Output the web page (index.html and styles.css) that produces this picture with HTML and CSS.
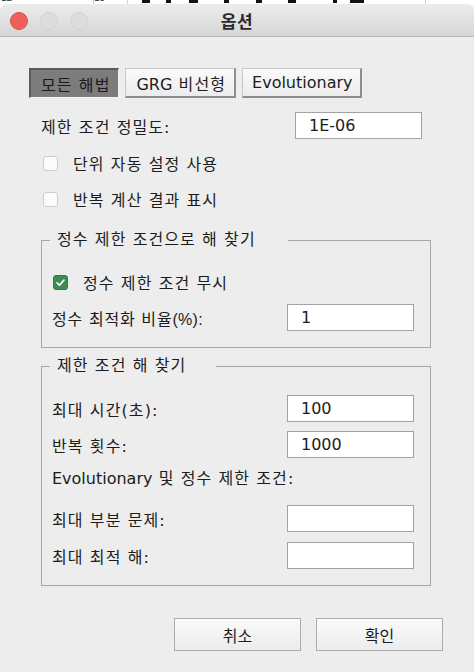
FILE: index.html
```html
<!DOCTYPE html>
<html lang="ko">
<head>
    <meta charset="UTF-8">
    <meta name="viewport" content="width=device-width, initial-scale=1.0">
    <title>옵션</title>
    <link rel="stylesheet" href="styles.css">
</head>
<body>

    <div class="sheet-strip">
        <div class="cell c1"><span>12</span></div>
        <div class="cell c2"><span>13</span></div>
        <div class="cell c3"></div>
        <div class="cell c4"></div>
    </div>

    <div class="window">
        <div class="titlebar">
            <div class="lights">
                <span class="light close"></span>
                <span class="light"></span>
                <span class="light"></span>
            </div>
            <div class="title">옵션</div>
        </div>

        <div class="content">
            <div class="tabs">
                <button class="tab active">모든 해법</button>
                <button class="tab"><span class="lat">GRG</span> 비선형</button>
                <button class="tab lat">Evolutionary</button>
            </div>

            <div class="row top-row">
                <span class="label">제한 조건 정밀도:</span>
                <input class="field wide" type="text" value="1E-06">
            </div>

            <label class="check first">
                <span class="box"></span>
                <span>단위 자동 설정 사용</span>
            </label>
            <label class="check second">
                <span class="box"></span>
                <span>반복 계산 결과 표시</span>
            </label>

            <fieldset class="group group-int">
                <legend>정수 제한 조건으로 해 찾기</legend>
                <label class="check inner">
                    <span class="box checked">
                        <svg viewBox="0 0 16 16" width="11" height="11"><path d="M3 8.5 L6.5 12 L13 4.5" fill="none" stroke="#fff" stroke-width="2.4" stroke-linecap="round" stroke-linejoin="round"/></svg>
                    </span>
                    <span>정수 제한 조건 무시</span>
                </label>
                <div class="row r-int">
                    <span class="label tight">정수 최적화 비율<span class="narrow">(%):</span></span>
                    <input class="field" type="text" value="1">
                </div>
            </fieldset>

            <fieldset class="group group-limit">
                <legend>제한 조건 해 찾기</legend>
                <div class="row r1">
                    <span class="label">최대 시간(초):</span>
                    <input class="field" type="text" value="100">
                </div>
                <div class="row r2">
                    <span class="label">반복 횟수:</span>
                    <input class="field" type="text" value="1000">
                </div>
                <div class="note"><span class="lat">Evolutionary</span> 및 정수 제한 조건:</div>
                <div class="row r3">
                    <span class="label">최대 부분 문제:</span>
                    <input class="field" type="text" value="">
                </div>
                <div class="row r4">
                    <span class="label">최대 최적 해:</span>
                    <input class="field" type="text" value="">
                </div>
            </fieldset>

            <div class="actions">
                <button class="btn">취소</button>
                <button class="btn">확인</button>
            </div>
        </div>
    </div>

</body>
</html>
```

FILE: styles.css
```css
body {
    margin: 0;
    padding: 0;
    background: #ffffff;
    font-family: 'DejaVu Sans', 'Noto Sans CJK KR', sans-serif;
    color: #1c1c1c;
    letter-spacing: 1.1px;
    overflow: hidden;
}

.lat {
    letter-spacing: 0;
}

.tight {
    letter-spacing: 0.8px;
}

.narrow {
    font-family: 'Liberation Sans', sans-serif;
    letter-spacing: 0.3px;
}

.sheet-strip {
    height: 4px;
    display: flex;
    overflow: hidden;
    background: #fff;
    font-family: 'Liberation Sans', sans-serif;
    letter-spacing: 0;
}

.cell {
    height: 4px;
    overflow: hidden;
    border-right: 1px solid #cfcfcf;
}

.cell span {
    display: block;
    font-size: 10px;
    line-height: 10px;
    margin-top: -7px;
    color: #333;
}

.c1 { width: 92px; padding-left: 1px; }
.c2 { width: 33px; }
.c3 {
    width: 297px;
    background:
        linear-gradient(90deg, transparent 0 14px, #111 14px 22px, transparent 22px 38px, #111 38px 43px,
            transparent 43px 61px, #111 61px 70px, transparent 70px 96px, #111 96px 101px,
            transparent 101px 128px, #111 128px 134px, transparent 134px 160px, #111 160px 168px,
            transparent 168px 205px, #111 205px 209px, transparent 209px 222px, #111 222px 236px,
            transparent 236px) left top / 100% 3px no-repeat;
}
.c4 { flex: 1; border-right: none; }

.window {
    background: #ededed;
    border-radius: 7px 7px 0 0;
    height: 668px;
    overflow: hidden;
}

.titlebar {
    height: 32px;
    border-bottom: 1px solid #b9b9b9;
    background: linear-gradient(#ececec, #d6d6d6);
    display: flex;
    align-items: center;
    position: relative;
}

.lights {
    display: flex;
    gap: 12px;
    padding-left: 10px;
    padding-top: 2px;
}

.light {
    width: 16px;
    height: 16px;
    border-radius: 50%;
    background: #dcdcdc;
    border: 1px solid #d2d2d2;
}

.light.close {
    background: #f0605a;
    border-color: #dc4f48;
}

.title {
    position: absolute;
    left: 0;
    right: 0;
    top: 0;
    line-height: 36px;
    text-align: center;
    font-size: 17px;
    font-weight: bold;
    letter-spacing: 0.5px;
    color: #2a2a2a;
}

.content {
    padding: 31px 0 0 0;
}

.tabs {
    display: flex;
    gap: 6px;
    margin-left: 29px;
}

.tab {
    height: 30px;
    padding: 0 8px 0 10px;
    font-family: inherit;
    font-size: 16px;
    letter-spacing: 1.1px;
    color: #1c1c1c;
    background: linear-gradient(#fafafa, #ececec);
    border: 1px solid #c8c8c8;
    border-right: 2px solid #8e8e8e;
    border-bottom: 2px solid #8e8e8e;
    border-radius: 0;
}

.tab.lat {
    letter-spacing: 0;
    padding: 0 7px 0 9px;
}

.tab.active {
    background: #7c7c7c;
    border: 2px solid #5b5b5b;
    border-right: 1px solid #f4f4f4;
    border-bottom: 1px solid #f4f4f4;
    color: #1a1a1a;
}

.row {
    display: flex;
    justify-content: space-between;
    align-items: center;
    height: 27px;
}

.label {
    font-size: 16px;
}

.top-row {
    margin: 14px 52px 0 41px;
}

.field {
    width: 127px;
    height: 27px;
    box-sizing: border-box;
    border: 1px solid #a2a2a2;
    background: #fff;
    font-family: inherit;
    font-size: 16px;
    letter-spacing: 0;
    color: #1c1c1c;
    padding: 0 0 0 13px;
    margin: 0;
    outline: none;
}

.check {
    display: flex;
    align-items: center;
    height: 20px;
    font-size: 16px;
}

.check.first { margin: 14px 0 0 43px; }
.check.second { margin: 16px 0 0 43px; }

.box {
    width: 15px;
    height: 15px;
    box-sizing: border-box;
    border: 1px solid #cdcdcd;
    border-radius: 3px;
    background: #fbfbfb;
    margin-right: 15px;
    display: flex;
    align-items: center;
    justify-content: center;
}

.box.checked {
    background: #3f8b52;
    border-color: #357a46;
}

.group {
    margin: 21px 43px 0 41px;
    padding: 0 16px 16px 10px;
    border: 1px solid #a6a6a6;
    min-width: 0;
}

.group legend {
    font-size: 16px;
    line-height: 20px;
    padding: 0 32px 0 7px;
    margin-left: -2px;
}

.group-int .inner {
    margin: 22px 0 0 1px;
}

.r-int { margin-top: 12px; }

.group-limit {
    margin-top: 8px;
    padding-bottom: 16px;
}

.group-limit legend {
    padding-right: 30px;
}

.r1 { margin-top: 19px; }
.r2 { margin-top: 9px; }

.note {
    height: 20px;
    line-height: 20px;
    margin-top: 11px;
    font-size: 16px;
}

.r3 { margin-top: 16px; }
.r4 { margin-top: 10px; }

.actions {
    display: flex;
    justify-content: flex-end;
    gap: 15px;
    margin: 32px 31px 0 0;
}

.btn {
    width: 127px;
    height: 33px;
    font-family: inherit;
    font-size: 16px;
    color: #1c1c1c;
    background: linear-gradient(#fbfbfb, #ececec);
    border: 1px solid #acacac;
    border-radius: 0;
}
```
